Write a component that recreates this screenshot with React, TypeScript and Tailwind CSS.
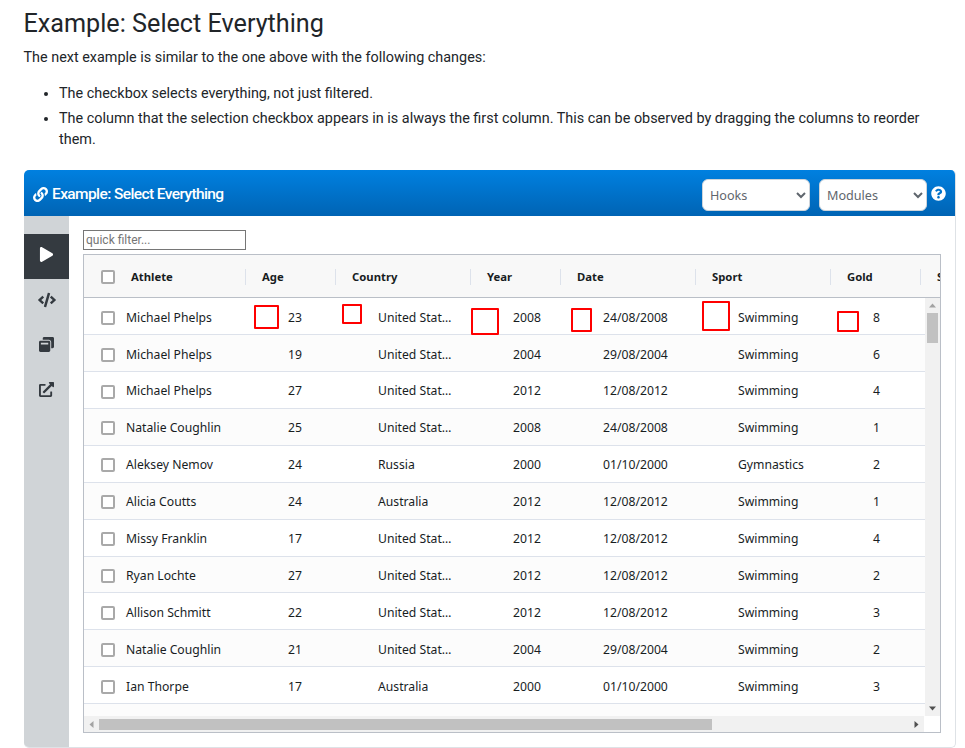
import { FaCode, FaExternalLinkAlt, FaLink, FaPlay, FaQuestionCircle, FaWindowRestore } from 'react-icons/fa';

const columns = [
  { name: 'Age', width: 'w-[90px]' },
  { name: 'Country', width: 'w-[135px]' },
  { name: 'Year', width: 'w-[90px]' },
  { name: 'Date', width: 'w-[135px]' },
  { name: 'Sport', width: 'w-[135px]' },
  { name: 'Gold', width: 'w-[90px]' },
];

const rows = [
  ['Michael Phelps', '23', 'United States', '2008', '24/08/2008', 'Swimming', '8'],
  ['Michael Phelps', '19', 'United States', '2004', '29/08/2004', 'Swimming', '6'],
  ['Michael Phelps', '27', 'United States', '2012', '12/08/2012', 'Swimming', '4'],
  ['Natalie Coughlin', '25', 'United States', '2008', '24/08/2008', 'Swimming', '1'],
  ['Aleksey Nemov', '24', 'Russia', '2000', '01/10/2000', 'Gymnastics', '2'],
  ['Alicia Coutts', '24', 'Australia', '2012', '12/08/2012', 'Swimming', '1'],
  ['Missy Franklin', '17', 'United States', '2012', '12/08/2012', 'Swimming', '4'],
  ['Ryan Lochte', '27', 'United States', '2012', '12/08/2012', 'Swimming', '2'],
  ['Allison Schmitt', '22', 'United States', '2012', '12/08/2012', 'Swimming', '3'],
  ['Natalie Coughlin', '21', 'United States', '2004', '29/08/2004', 'Swimming', '2'],
  ['Ian Thorpe', '17', 'Australia', '2000', '01/10/2000', 'Swimming', '3'],
  ['', '', '', '', '', '', ''],
];

// red boxes sitting over the first row
const markers = [
  'left-[170px] top-[7px] w-[25px] h-[24px]',
  'left-[258px] top-[6px] w-[20px] h-[20px]',
  'left-[387px] top-[10px] w-[28px] h-[27px]',
  'left-[487px] top-[10px] w-[21px] h-[24px]',
  'left-[618px] top-[3px] w-[28px] h-[30px]',
  'left-[753px] top-[13px] w-[22px] h-[21px]',
];

function Checkbox({ blank }: { blank?: boolean }) {
  return (
    <span
      className={`block w-[14px] h-[14px] shrink-0 rounded-[2px] border-2 border-[#a9a9a9] bg-white ${blank ? 'opacity-40' : ''}`}
    />
  );
}

function GridRow({ row, index }: { row: string[]; index: number }) {
  return (
    <div
      className={`flex h-[36.9px] shrink-0 items-center border-b border-[#dde2eb] pt-[3px] text-[12.2px] text-[#181d1f] ${
        index % 2 ? 'bg-[#fcfcfc]' : 'bg-white'
      }`}
    >
      <div className="flex w-[162px] shrink-0 items-center pl-[17px]">
        <Checkbox blank={row[0] === ''} />
        <span className="ml-[11px] whitespace-nowrap">{row[0]}</span>
      </div>
      {columns.map((col, i) => (
        <div key={col.name} className={`${col.width} shrink-0 truncate pl-[42px] pr-[18px]`}>
          {row[i + 1]}
        </div>
      ))}
    </div>
  );
}

function Grid() {
  return (
    <div className="flex h-[479px] w-[858px] flex-col overflow-hidden border border-[#babfc7] bg-white font-['Noto_Sans',sans-serif]">
      <div className="flex h-[43px] shrink-0 items-center overflow-hidden border-b border-[#babfc7] bg-[#f8f8f8] pt-[2px] text-[11.3px] font-bold text-[#181d1f]">
        <div className="flex h-[16px] w-[162px] shrink-0 items-center border-r border-[#dde2eb] pl-[17px]">
          <Checkbox />
          <span className="ml-[16px]">Athlete</span>
        </div>
        {columns.map((col) => (
          <div key={col.name} className={`${col.width} flex h-[16px] shrink-0 items-center border-r border-[#dde2eb] pl-[16px]`}>
            {col.name}
          </div>
        ))}
        <div className="pl-[16px]">Silver</div>
      </div>
      <div className="flex min-h-0 flex-1">
        <div className="relative min-w-0 flex-1 overflow-hidden">
          {rows.map((row, i) => (
            <GridRow key={i} row={row} index={i} />
          ))}
          {markers.map((m) => (
            <span key={m} className={`absolute rounded-[1px] border-2 border-[#ff0000] ${m}`} />
          ))}
        </div>
        <div className="flex w-[15px] shrink-0 flex-col items-center bg-[#f1f1f1]">
          <svg width="15" height="15" viewBox="0 0 15 15" className="shrink-0">
            <path d="M4 9.5h7L7.5 5.5z" fill="#a3a3a3" />
          </svg>
          <div className="h-[30px] w-[11px] bg-[#c1c1c1]" />
          <div className="flex-1" />
          <svg width="15" height="15" viewBox="0 0 15 15" className="shrink-0">
            <path d="M4 5.5h7L7.5 9.5z" fill="#505050" />
          </svg>
        </div>
      </div>
      <div className="flex h-[16px] shrink-0 bg-white">
        <div className="flex w-[840px] items-center bg-[#f1f1f1]">
          <svg width="15" height="15" viewBox="0 0 15 15" className="shrink-0">
            <path d="M9.5 4v7L5.5 7.5z" fill="#a3a3a3" />
          </svg>
          <div className="h-[11px] w-[613px] bg-[#c1c1c1]" />
          <div className="flex-1" />
          <svg width="15" height="15" viewBox="0 0 15 15" className="shrink-0">
            <path d="M5.5 4v7L9.5 7.5z" fill="#505050" />
          </svg>
        </div>
      </div>
    </div>
  );
}

function Picker({ label }: { label: string }) {
  return (
    <select
      defaultValue={label}
      className="h-[32px] w-[108px] rounded-[6px] border border-[#ced4da] bg-white pl-[3px] font-['Noto_Sans',sans-serif] text-[12.6px] text-[#5f666d]"
    >
      <option>{label}</option>
    </select>
  );
}

export default function App() {
  return (
    <div className="min-h-[748px] overflow-hidden bg-white pl-6 pr-[9px] pt-[7px] font-['Roboto',sans-serif] text-[#212529]">
      <h2 className="-ml-[0.5px] text-[25.2px] font-normal leading-[34px]">Example: Select Everything</h2>
      <p className="-ml-[0.5px] mt-[6px] text-[14.4px] leading-[21.6px]">
        The next example is similar to the one above with the following changes:
      </p>
      <ul className="mt-[14px] list-disc pl-[35px] text-[14.4px] leading-[21.6px]">
        <li>The checkbox selects everything, not just filtered.</li>
        <li className="mt-[3.6px]">
          The column that the selection checkbox appears in is always the first column. This can be observed by dragging
          the columns to reorder them.
        </li>
      </ul>

      <div className="mt-[19.4px] flex h-[578px] w-[932px] flex-col overflow-hidden rounded-[5px] border-b border-r border-[#dee2e6]">
        <div className="flex h-[46px] shrink-0 items-center bg-gradient-to-b from-[#0080e0] to-[#0064b4] pl-[9px] pr-[9px] pt-[4px] text-white">
          <FaLink className="-mt-[1px] h-[15px] w-[15px]" />
          <span className="-mt-[1px] ml-[4px] text-[15.5px] font-medium tracking-[-0.6px]">Example: Select Everything</span>
          <div className="ml-auto flex items-center gap-[9px]">
            <Picker label="Hooks" />
            <Picker label="Modules" />
          </div>
          <FaQuestionCircle className="-mt-[3px] ml-[4px] h-[15px] w-[15px]" />
        </div>
        <div className="flex min-h-0 flex-1">
          <div className="flex w-[45px] shrink-0 flex-col bg-[#d0d4d7] pt-[18px] text-[#343a40]">
            <div className="flex h-[45px] items-center justify-center bg-[#343a40] pb-[4px] text-white">
              <FaPlay className="h-[15px] w-[15px]" />
            </div>
            <div className="flex h-[45px] items-center justify-center pb-[4px]">
              <FaCode className="h-[18px] w-[18px]" />
            </div>
            <div className="flex h-[45px] items-center justify-center pb-[4px]">
              <FaWindowRestore className="h-[15px] w-[15px]" />
            </div>
            <div className="flex h-[45px] items-center justify-center pb-[4px]">
              <FaExternalLinkAlt className="h-[15px] w-[15px]" />
            </div>
          </div>
          <div className="flex flex-col pl-[14px] pt-[14px]">
            <input
              placeholder="quick filter..."
              className="mb-[4px] h-[20px] w-[163px] border border-[#767676] px-[2px] text-[12px] placeholder:text-[#757575]"
            />
            <Grid />
          </div>
        </div>
      </div>
    </div>
  );
}
